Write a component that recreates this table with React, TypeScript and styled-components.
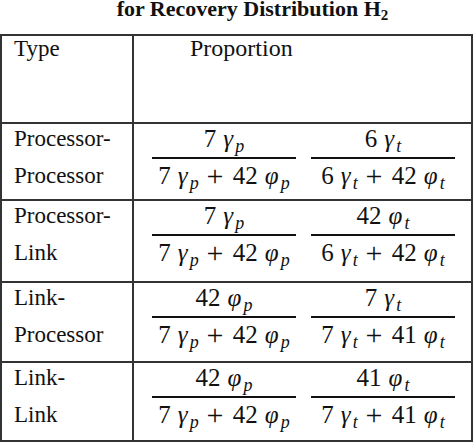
import React from 'react';
import styled, { createGlobalStyle } from 'styled-components';

const GlobalStyle = createGlobalStyle`
  html, body {
    margin: 0;
    padding: 0;
    background: #ffffff;
  }
  body {
    font-family: "Liberation Serif", "Times New Roman", serif;
    color: #111111;
  }
`;

const Page = styled.div`
  width: 474px;
  height: 442px;
  overflow: hidden;
`;

const Title = styled.h2`
  margin: 0;
  padding-left: 31px;
  height: 18px;
  line-height: 18px;
  font-size: 22px;
  font-weight: 700;
  text-align: center;
  white-space: nowrap;

  sub {
    font-size: 15px;
    line-height: 0;
    vertical-align: -4px;
  }
`;

const Table = styled.div`
  margin-top: 16px;
  width: 473px;
  box-sizing: border-box;
  border: 2px solid #333333;
`;

const Row = styled.div<{ $h: number; $last?: boolean }>`
  display: grid;
  grid-template-columns: 132px 1fr;
  height: ${(p) => p.$h}px;
  border-bottom: ${(p) => (p.$last ? 'none' : '2px solid #333333')};
`;

const TypeCell = styled.div`
  border-right: 2px solid #333333;
  padding-left: 12px;
  overflow: hidden;
`;

const Label = styled.div<{ $shift?: number }>`
  margin-top: ${(p) => -4 + (p.$shift ?? 0)}px;
  font-size: 23px;
  line-height: 37px;
  white-space: nowrap;
`;

const ProportionHead = styled(Label)`
  padding-left: 56px;
  font-size: 24px;
`;

const FractionCell = styled.div`
  display: flex;
  align-items: flex-start;
  gap: 15px;
  padding-left: 18px;
`;

const Fraction = styled.div`
  width: 144px;
  display: flex;
  flex-direction: column;
  align-items: center;
  font-size: 25px;
`;

const Numerator = styled.div`
  padding-top: 1px;
  height: 27px;
  line-height: 27px;
  white-space: nowrap;
`;

const Bar = styled.div`
  margin-top: 5px;
  width: 100%;
  height: 2px;
  background: #111111;
`;

const Denominator = styled.div`
  margin-top: 3px;
  line-height: 27px;
  white-space: nowrap;
`;

const Coef = styled.span`
  margin-right: 7px;
`;

const Sym = styled.i`
  font-style: italic;
`;

const Sub = styled.i`
  font-size: 18px;
  line-height: 0;
  vertical-align: -5px;
  margin-left: 2px;
`;

const Plus = styled.span`
  display: inline-block;
  margin: 0 11px 0 9px;
  transform: scale(1.2);
`;

type Term = { c: string; s: 'γ' | 'φ'; sub: 'p' | 't' };

const T = (c: string, s: 'γ' | 'φ', sub: 'p' | 't'): Term => ({ c, s, sub });

const TermView = ({ t }: { t: Term }) => (
  <>
    <Coef>{t.c}</Coef>
    <Sym>{t.s}</Sym>
    <Sub>{t.sub}</Sub>
  </>
);

const Expr = ({ terms }: { terms: Term[] }) => (
  <>
    {terms.map((t, i) => (
      <React.Fragment key={i}>
        {i > 0 && <Plus>+</Plus>}
        <TermView t={t} />
      </React.Fragment>
    ))}
  </>
);

type Frac = { num: Term; den: Term[] };

interface RowData {
  lines: [string, string];
  h: number;
  fracs: [Frac, Frac];
}

const denP = [T('7', 'γ', 'p'), T('42', 'φ', 'p')];

const rows: RowData[] = [
  {
    lines: ['Processor-', 'Processor'],
    h: 75,
    fracs: [
      { num: T('7', 'γ', 'p'), den: denP },
      { num: T('6', 'γ', 't'), den: [T('6', 'γ', 't'), T('42', 'φ', 't')] },
    ],
  },
  {
    lines: ['Processor-', 'Link'],
    h: 80,
    fracs: [
      { num: T('7', 'γ', 'p'), den: denP },
      { num: T('42', 'φ', 't'), den: [T('6', 'γ', 't'), T('42', 'φ', 't')] },
    ],
  },
  {
    lines: ['Link-', 'Processor'],
    h: 78,
    fracs: [
      { num: T('42', 'φ', 'p'), den: denP },
      { num: T('7', 'γ', 't'), den: [T('7', 'γ', 't'), T('41', 'φ', 't')] },
    ],
  },
  {
    lines: ['Link-', 'Link'],
    h: 77,
    fracs: [
      { num: T('42', 'φ', 'p'), den: denP },
      { num: T('41', 'φ', 't'), den: [T('7', 'γ', 't'), T('41', 'φ', 't')] },
    ],
  },
];

export default function App() {
  return (
    <Page>
      <GlobalStyle />
      <Title>
        for Recovery Distribution H<sub>2</sub>
      </Title>
      <Table>
        <Row $h={86}>
          <TypeCell>
            <Label $shift={-2}>Type</Label>
          </TypeCell>
          <div>
            <ProportionHead $shift={-2}>Proportion</ProportionHead>
          </div>
        </Row>
        {rows.map((r, i) => (
          <Row key={i} $h={r.h} $last={i === rows.length - 1}>
            <TypeCell>
              <Label>{r.lines[0]}</Label>
              <Label $shift={4}>{r.lines[1]}</Label>
            </TypeCell>
            <FractionCell>
              {r.fracs.map((f, j) => (
                <Fraction key={j}>
                  <Numerator>
                    <TermView t={f.num} />
                  </Numerator>
                  <Bar />
                  <Denominator>
                    <Expr terms={f.den} />
                  </Denominator>
                </Fraction>
              ))}
            </FractionCell>
          </Row>
        ))}
      </Table>
    </Page>
  );
}
